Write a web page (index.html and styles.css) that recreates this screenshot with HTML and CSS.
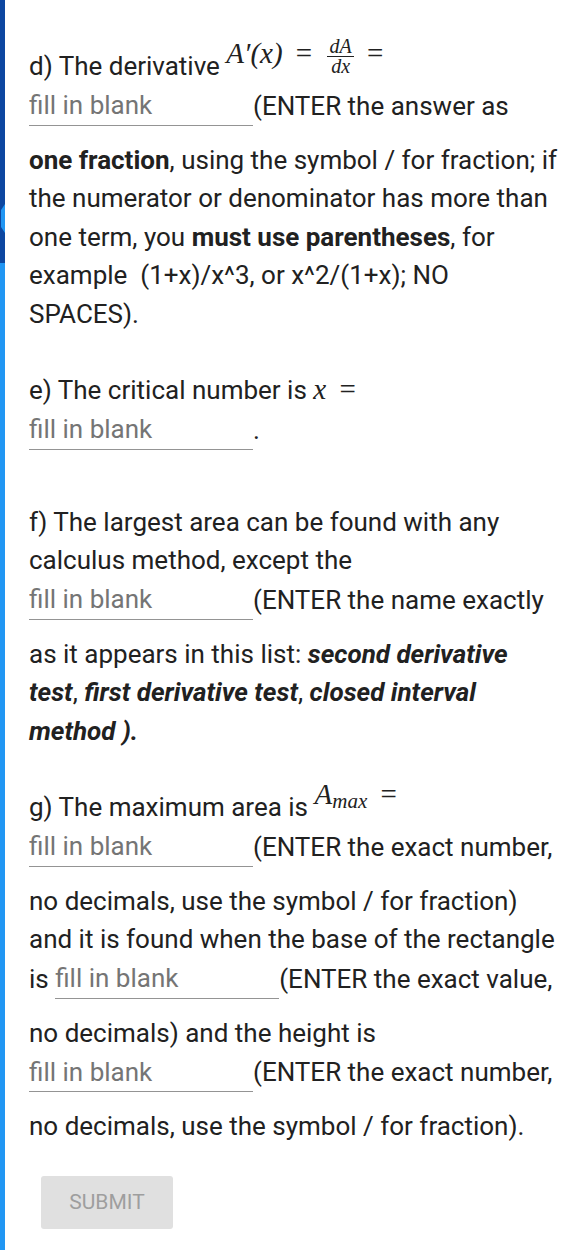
FILE: index.html
```html
<!DOCTYPE html>
<html lang="en">
<head>
    <meta charset="UTF-8">
    <title>Rectangle area problem</title>
    <link rel="stylesheet" href="styles.css">
</head>
<body>
    <div class="card">
        <p class="q">
            d) The derivative
            <span class="math raise">A&prime;(x) <span class="op">=</span>
                <span class="frac"><span class="num">dA</span><span class="den">dx</span></span>
                <span class="op">=</span></span>
            <input class="blank" type="text" placeholder="fill in blank">(ENTER the answer as
            <b>one&nbsp;fraction</b>, using the symbol / for fraction; if the numerator or denominator has more than
            one term, you <b>must use parentheses</b>, for example&nbsp; (1+x)/x^3, or x^2/(1+x); NO SPACES).
        </p>

        <p class="q">
            e) The critical number is <span class="math">x <span class="op">=</span></span>
            <input class="blank" type="text" placeholder="fill in blank">.
        </p>

        <p class="q">
            f) The largest area can be found with any calculus method, except the
            <input class="blank" type="text" placeholder="fill in blank">(ENTER the name exactly
            as it appears in this list: <b><i>second derivative test</i></b>, <b><i>first derivative test</i></b>,
            <b><i>closed interval method ).</i></b>
        </p>

        <p class="q">
            g) The maximum area is <span class="math raise">A<sub>max</sub> <span class="op">=</span></span>
            <input class="blank" type="text" placeholder="fill in blank">(ENTER the exact number,
            no decimals, use the symbol / for fraction) and it is found when the base of the rectangle
            is <input class="blank" type="text" placeholder="fill in blank">(ENTER the exact value,
            no decimals) and the height is
            <input class="blank" type="text" placeholder="fill in blank">(ENTER the exact number,
            no decimals, use the symbol / for fraction).
        </p>

        <button class="submit" disabled>Submit</button>
    </div>
</body>
</html>
```

FILE: styles.css
```css
body {
    margin: 0;
    background: #fff;
    font-family: Roboto, "Noto Sans", Arial, sans-serif;
    color: #212121;
}
.card {
    position: relative;
    min-height: 1250px;
    box-sizing: border-box;
    border-left: 5px solid #2196f3;
    padding: 37px 0 20px 24px;
}
/* darker top part of the rail, with the little notch */
.card::before {
    content: "";
    position: absolute;
    left: -5px;
    top: 0;
    width: 5px;
    height: 263px;
    background: #0d47a1;
    clip-path: polygon(0 0, 5px 0, 5px 204px, 1px 210px, 1px 227px, 5px 233px, 5px 263px, 0 263px);
}
.q {
    margin: 0 0 38px;
    font-size: 26px;
    line-height: 38.5px;
}
.math {
    font-family: "Liberation Serif", "DejaVu Serif", serif;
    font-style: italic;
    font-size: 29px;
    line-height: 0;
}
.math .op {
    font-style: normal;
    margin: 0 6px;
}
.math sub {
    font-size: 21px;
    vertical-align: -4px;
}
.raise {
    vertical-align: 12px;
}
.frac {
    display: inline-flex;
    flex-direction: column;
    align-items: center;
    vertical-align: middle;
    font-size: 20px;
    line-height: 19px;
    margin-left: 2px;
}
.frac .num {
    border-bottom: 1px solid #212121;
    padding: 0 2px;
}
.blank {
    display: inline-block;
    width: 224px;
    height: 40px;
    box-sizing: border-box;
    margin: 0 0 15px;
    padding: 0;
    border: 0;
    border-bottom: 1px solid #949494;
    font: inherit;
    color: #212121;
    background: transparent;
    outline: none;
}
.blank::placeholder {
    color: #757575;
}
.submit {
    margin: -8px 0 0 12px;
    width: 132px;
    height: 53px;
    border: 0;
    border-radius: 3px;
    background: #e0e0e0;
    color: #9e9e9e;
    font-family: Roboto, Arial, sans-serif;
    font-size: 21px;
    text-transform: uppercase;
}
```
